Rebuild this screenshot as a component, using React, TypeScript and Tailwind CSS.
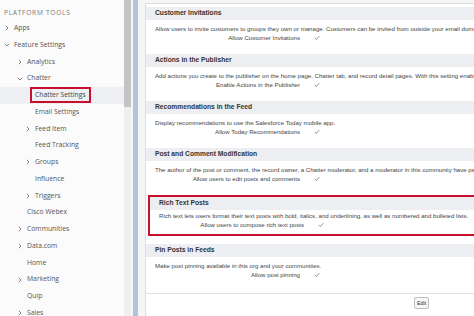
import React from 'react';

type NavItem = { label: string; depth: number; chevron?: 'right' | 'down'; selected?: boolean };

const NAV: NavItem[] = [
  { label: 'Apps', depth: 0, chevron: 'right' },
  { label: 'Feature Settings', depth: 0, chevron: 'down' },
  { label: 'Analytics', depth: 1, chevron: 'right' },
  { label: 'Chatter', depth: 1, chevron: 'down' },
  { label: 'Chatter Settings', depth: 2, selected: true },
  { label: 'Email Settings', depth: 2 },
  { label: 'Feed Item', depth: 2, chevron: 'right' },
  { label: 'Feed Tracking', depth: 2 },
  { label: 'Groups', depth: 2, chevron: 'right' },
  { label: 'Influence', depth: 2 },
  { label: 'Triggers', depth: 2, chevron: 'right' },
  { label: 'Cisco Webex', depth: 1 },
  { label: 'Communities', depth: 1, chevron: 'right' },
  { label: 'Data.com', depth: 1, chevron: 'right' },
  { label: 'Home', depth: 1 },
  { label: 'Marketing', depth: 1, chevron: 'right' },
  { label: 'Quip', depth: 1 },
  { label: 'Sales', depth: 1, chevron: 'right' },
];

const SECTIONS = [
  {
    title: 'Customer Invitations',
    desc: 'Allow users to invite customers to groups they own or manage. Customers can be invited from outside your email domain.',
    label: 'Allow Customer Invitations',
  },
  {
    title: 'Actions in the Publisher',
    desc: 'Add actions you create to the publisher on the home page, Chatter tab, and record detail pages. With this setting enabled, you can customize the actions.',
    label: 'Enable Actions in the Publisher',
  },
  {
    title: 'Recommendations in the Feed',
    desc: 'Display recommendations to use the Salesforce Today mobile app.',
    label: 'Allow Today Recommendations',
  },
  {
    title: 'Post and Comment Modification',
    desc: 'The author of the post or comment, the record owner, a Chatter moderator, and a moderator in this community have permission to edit.',
    label: 'Allow users to edit posts and comments',
  },
  {
    title: 'Rich Text Posts',
    desc: 'Rich text lets users format their text posts with bold, italics, and underlining, as well as numbered and bulleted lists.',
    label: 'Allow users to compose rich text posts',
    highlight: true,
  },
  {
    title: 'Pin Posts in Feeds',
    desc: 'Make post pinning available in this org and your communities.',
    label: 'Allow post pinning',
  },
];

const PAD = ['pl-[4px]', 'pl-[17px]', 'pl-[25px]'];

function Chevron({ dir }: { dir: 'right' | 'down' }) {
  return (
    <svg width="6" height="6" viewBox="0 0 6 6" fill="none" stroke="#777" strokeWidth="0.9" strokeLinecap="round" strokeLinejoin="round">
      {dir === 'right' ? <path d="M2 1l2 2-2 2" /> : <path d="M1 2l2 2 2-2" />}
    </svg>
  );
}

function Check() {
  return (
    <svg width="6" height="6" viewBox="0 0 6 6" fill="none" stroke="#8a8a8a" strokeWidth="0.9" strokeLinecap="round" strokeLinejoin="round">
      <path d="M1 3.2l1.4 1.4L5 1.4" />
    </svg>
  );
}

function Section({ s, compact }: { s: (typeof SECTIONS)[number]; compact?: boolean }) {
  return (
    <div className="flex flex-col">
      <div className="h-[13px] bg-[#eceef1] flex items-center pl-[9px] text-[6.7px] font-bold text-[#333] whitespace-nowrap">
        {s.title}
      </div>
      <div className={`${compact ? 'h-[24px] pt-[1px]' : 'h-[34px] pt-[4px]'} flex flex-col`}>
        <div className="h-[9px] flex items-center pl-[9px] text-[6.1px] text-[#444] whitespace-nowrap">{s.desc}</div>
        <div className="h-[9px] flex items-center">
          <div className="w-[154px] text-right text-[6.1px] text-[#444] whitespace-nowrap">{s.label}</div>
          <div className="ml-[14px]">
            <Check />
          </div>
        </div>
      </div>
    </div>
  );
}

export default function App() {
  return (
    <div className="w-[474px] h-[316px] overflow-hidden flex bg-[#f4f4f4]" style={{ fontFamily: 'Arial, "Liberation Sans", sans-serif' }}>
      <aside className="w-[124px] shrink-0 bg-[#fbfbfb] flex flex-col pt-[8px]" style={{ fontFamily: '"Open Sans", "Noto Sans", sans-serif' }}>
        <div className="h-[13px] flex items-center pl-[4px] text-[6.6px] tracking-[0.11em] text-[#777] whitespace-nowrap">PLATFORM TOOLS</div>
        <div className="flex flex-col mt-[2px]">
          {NAV.map((n) => (
            <div key={n.label} className={`h-[16.75px] flex items-center ${PAD[n.depth]} ${n.selected ? 'bg-[#eef0f3]' : ''}`}>
              <div className="w-[10px] flex items-center">{n.chevron && <Chevron dir={n.chevron} />}</div>
              {n.selected ? (
                <span className="-ml-[5px] px-[3px] h-[16px] flex items-center border-2 border-[#c8102e] text-[6.8px] text-[#444] whitespace-nowrap">
                  {n.label}
                </span>
              ) : (
                <span className="text-[6.8px] text-[#555] whitespace-nowrap">{n.label}</span>
              )}
            </div>
          ))}
        </div>
      </aside>

      <div className="w-[7px] shrink-0 bg-[#efefef] flex flex-col">
        <div className="h-[107px] bg-[#c4c4c4]" />
      </div>

      <div className="flex-1 flex bg-[#f5f6f8] pl-[2px]">
        <div className="w-[5px] shrink-0 bg-[#b3c3dc]" />
        <div className="flex-1 pl-[7px] pt-[3px] overflow-hidden">
          <div className="bg-white border border-[#dddddd] border-r-0 h-[330px] flex flex-col pt-[3px]">
            {SECTIONS.map((s) =>
              s.highlight ? (
                <div key={s.title} className="ml-[2px] mr-[2px] mb-[8px] border-2 border-[#c8102e]">
                  <Section s={s} compact />
                </div>
              ) : (
                <Section key={s.title} s={s} />
              )
            )}
            <div className="mt-[2px] border-t border-[#e2e2e2] flex pt-[3px]">
              <div className="ml-[268px] h-[12px] px-[2px] flex items-center border border-[#bfbfbf] rounded-[2px] bg-[#f7f7f7] text-[5.4px] text-[#333]">
                Edit
              </div>
            </div>
          </div>
        </div>
      </div>
    </div>
  );
}
